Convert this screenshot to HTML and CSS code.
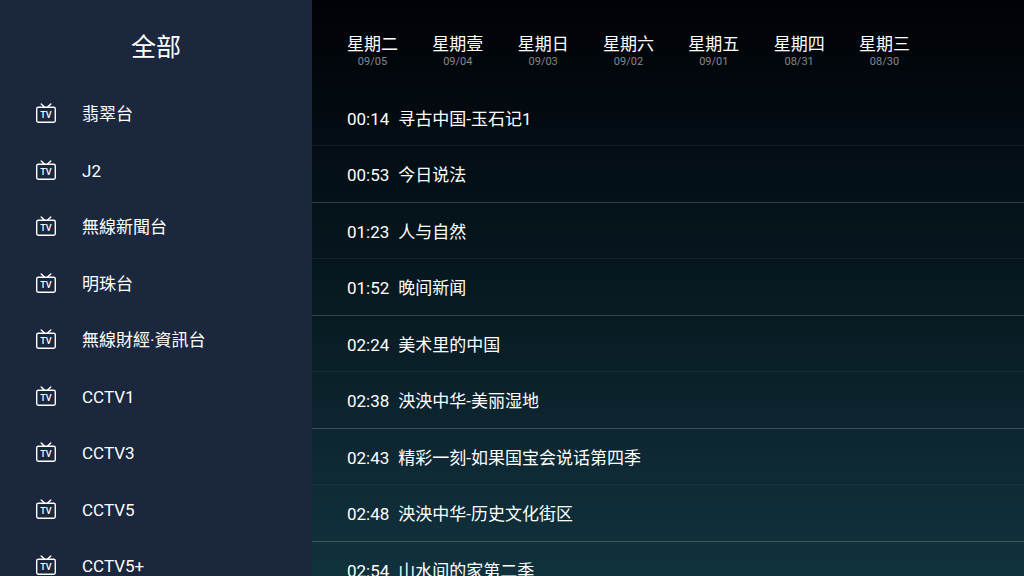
FILE: index.html
```html
<!DOCTYPE html>
<html lang="zh-CN">
<head>
<meta charset="utf-8">
<meta name="viewport" content="width=device-width, initial-scale=1">
<title>全部</title>
<link rel="stylesheet" href="styles.css">
</head>
<body>
<svg class="sprite" aria-hidden="true">
  <symbol id="tv" viewBox="0 0 22 22">
    <g fill="none" stroke="currentColor" stroke-width="1.4" stroke-linecap="round" stroke-linejoin="round">
      <rect x="1.7" y="4.3" width="18.6" height="14.9" rx="1.6"/>
      <path d="M6.2 .9 9.4 4.1M15.8 .9 12.6 4.1"/>
    </g>
    <text class="tv-label" x="11" y="15" text-anchor="middle">TV</text>
  </symbol>
</svg>
<div class="app">
  <aside class="sidebar">
    <h1 class="sidebar-title">全部</h1>
    <ul class="channels">
      <li class="channel-item"><button class="channel"><svg class="channel-icon"><use href="#tv"/></svg>翡翠台</button></li>
      <li class="channel-item"><button class="channel"><svg class="channel-icon"><use href="#tv"/></svg>J2</button></li>
      <li class="channel-item"><button class="channel"><svg class="channel-icon"><use href="#tv"/></svg>無線新聞台</button></li>
      <li class="channel-item"><button class="channel"><svg class="channel-icon"><use href="#tv"/></svg>明珠台</button></li>
      <li class="channel-item"><button class="channel"><svg class="channel-icon"><use href="#tv"/></svg>無線財經·資訊台</button></li>
      <li class="channel-item"><button class="channel"><svg class="channel-icon"><use href="#tv"/></svg>CCTV1</button></li>
      <li class="channel-item"><button class="channel"><svg class="channel-icon"><use href="#tv"/></svg>CCTV3</button></li>
      <li class="channel-item"><button class="channel"><svg class="channel-icon"><use href="#tv"/></svg>CCTV5</button></li>
      <li class="channel-item"><button class="channel"><svg class="channel-icon"><use href="#tv"/></svg>CCTV5+</button></li>
    </ul>
  </aside>
  <main class="guide">
    <nav class="days">
      <button class="day">星期二<span class="date">09/05</span></button>
      <button class="day">星期壹<span class="date">09/04</span></button>
      <button class="day">星期日<span class="date">09/03</span></button>
      <button class="day">星期六<span class="date">09/02</span></button>
      <button class="day">星期五<span class="date">09/01</span></button>
      <button class="day">星期四<span class="date">08/31</span></button>
      <button class="day">星期三<span class="date">08/30</span></button>
    </nav>
    <ul class="programs">
      <li class="program"><time>00:14</time><span>寻古中国-玉石记1</span></li>
      <li class="program"><time>00:53</time><span>今日说法</span></li>
      <li class="program"><time>01:23</time><span>人与自然</span></li>
      <li class="program"><time>01:52</time><span>晚间新闻</span></li>
      <li class="program"><time>02:24</time><span>美术里的中国</span></li>
      <li class="program"><time>02:38</time><span>泱泱中华-美丽湿地</span></li>
      <li class="program"><time>02:43</time><span>精彩一刻-如果国宝会说话第四季</span></li>
      <li class="program"><time>02:48</time><span>泱泱中华-历史文化街区</span></li>
      <li class="program"><time>02:54</time><span>山水间的家第二季</span></li>
    </ul>
  </main>
</div>
</body>
</html>
```

FILE: styles.css
```css
* {
  box-sizing: border-box;
}

body {
  margin: 0;
  overflow: hidden;
  background: #000;
  color: #fff;
  font: 17px/24px Roboto, "Noto Sans CJK SC", sans-serif;
}

button {
  padding: 0;
  border: 0;
  background: none;
  color: inherit;
  font: inherit;
  cursor: pointer;
}

ul {
  margin: 0;
  padding: 0;
  list-style: none;
}

.sprite {
  display: none;
}

.app {
  display: grid;
  grid-template-columns: 312px 1fr;
  height: 100vh;
}

.sidebar {
  overflow: hidden;
  background: #1a273c;
}

.sidebar-title {
  margin: 0;
  padding: 28px 0 18px;
  font-size: 25px;
  font-weight: 400;
  line-height: 40px;
  text-align: center;
}

.channel-item {
  display: flex;
  height: 56px;
}

.channel-item:nth-child(even),
.program:nth-child(even) {
  height: 57px;
}

.channel {
  display: flex;
  flex: 1;
  align-items: center;
  gap: 25px;
  padding-left: 35px;
}

.channel-icon {
  width: 22px;
  height: 22px;
}

.tv-label {
  fill: currentColor;
  font: 500 9px Roboto, sans-serif;
}

.guide {
  overflow: hidden;
  background: linear-gradient(#010206, #030d14 25%, #081b23 55%, #0e2934 80%, #10323c);
}

.days {
  display: flex;
  justify-content: space-between;
  max-width: 598px;
  padding: 32px 0 22px 35px;
}

.day {
  display: flex;
  flex-direction: column;
  align-items: center;
}

.date {
  color: #85878a;
  font-size: 11px;
  line-height: 12px;
}

.program {
  display: flex;
  align-items: center;
  gap: 9px;
  height: 56px;
  padding: 2px 0 0 35px;
  border-bottom: 1px solid rgb(255 255 255 / 5%);
}

.program:nth-child(even) {
  border-bottom-color: rgb(255 255 255 / 19%);
}
```
